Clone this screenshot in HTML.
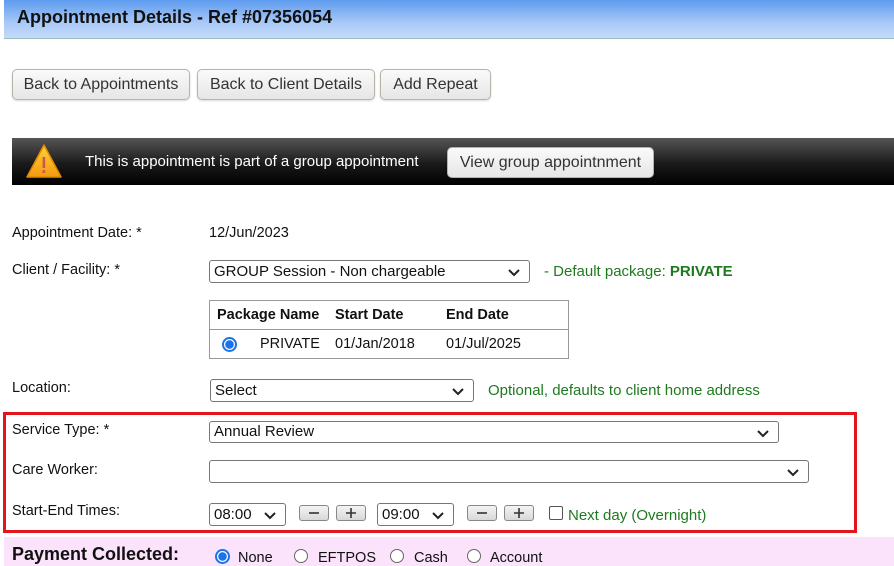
<!DOCTYPE html>
<html><head><style>
*{box-sizing:border-box;margin:0;padding:0}
body{width:894px;height:566px;overflow:hidden;background:#fff;font-family:"Liberation Sans",sans-serif;font-size:14px;color:#111;position:relative}
.a{position:absolute;white-space:nowrap}
.hdr{left:4px;top:0;width:890px;height:39px;background:linear-gradient(#5e9bef,#a9c9f7 60%,#c4dafa);border-bottom:1px solid #9bb}
.hdr span{position:absolute;left:13px;top:7px;font-size:18px;font-weight:bold;color:#111}
.btn{height:31px;border:1px solid #b6b3a8;border-radius:5px;background:linear-gradient(#fafafa,#e6e6e6);font-size:16px;color:#333;text-align:center;line-height:29px;box-shadow:0 1px 2px rgba(0,0,0,.15)}
.bar{left:12px;top:138px;width:882px;height:47px;background:linear-gradient(#555,#1a1a1a 55%,#000)}
.sel{border:1px solid #767676;border-radius:3px;background:#fff;height:23px;padding-left:4px;line-height:21px;font-size:15px;color:#111}
.sel svg{position:absolute;right:9px;top:8px}
.lbl{left:12px;font-size:14.5px}
.grn{color:#1e7a1e;font-size:15px}
.pm{width:30px;height:16px;border:1px solid #888;border-radius:3px;background:linear-gradient(#f4f4f4,#d8d8d8)}
.rad{width:14px;height:14px;border:1px solid #666;border-radius:50%;background:#fff}
.on{width:15px;height:15px;border-radius:50%;border:2px solid #1a73e8;background:radial-gradient(circle,#1a73e8 0,#1a73e8 4px,#fff 4.5px)}
</style></head><body>
<div class="a hdr"><span>Appointment Details - Ref #07356054</span></div>
<div class="a btn" style="left:12px;top:69px;width:178px">Back to Appointments</div>
<div class="a btn" style="left:197px;top:69px;width:178px">Back to Client Details</div>
<div class="a btn" style="left:380px;top:69px;width:111px">Add Repeat</div>
<div class="a bar"></div>
<svg class="a" style="left:25px;top:143px" width="38" height="36" viewBox="0 0 38 36"><defs><linearGradient id="g" x1="0" y1="0" x2="0" y2="1"><stop offset="0" stop-color="#ffd23a"/><stop offset="1" stop-color="#f39a10"/></linearGradient></defs><path d="M19 2 L36 34 L2 34 Z" fill="url(#g)" stroke="#e08a00" stroke-width="1.5" stroke-linejoin="round"/><rect x="17.6" y="14" width="2.6" height="11" fill="#c55"/><rect x="17.6" y="27" width="2.6" height="3" fill="#c55"/></svg>
<div class="a" style="left:85px;top:153px;color:#fff;font-size:15px">This is appointment is part of a group appointment</div>
<div class="a btn" style="left:447px;top:147px;width:207px;height:31px">View group appointnment</div>

<div class="a lbl" style="top:225px">Appointment Date: *</div>
<div class="a" style="left:209px;top:225px;font-size:14.5px">12/Jun/2023</div>
<div class="a lbl" style="top:262px">Client / Facility: *</div>
<div class="a sel" style="left:209px;top:260px;width:321px">GROUP Session - Non chargeable<svg width="12" height="8"><path d="M1 1l5 5 5-5" stroke="#222" stroke-width="2" fill="none"/></svg></div>
<div class="a grn" style="left:544px;top:263px">- Default package: <b>PRIVATE</b></div>

<div class="a" style="left:209px;top:300px;width:360px;height:59px;border:1px solid #999">
<div style="height:29px;border-bottom:1px solid #999;font-weight:bold;font-size:14.5px;line-height:29px;position:relative"><span class="a" style="left:7px">Package Name</span><span class="a" style="left:125px">Start Date</span><span class="a" style="left:236px">End Date</span></div>
<div style="position:relative;height:28px;line-height:28px;font-size:14.5px"><span class="a on" style="left:12px;top:7px"></span><span class="a" style="left:50px">PRIVATE</span><span class="a" style="left:125px">01/Jan/2018</span><span class="a" style="left:236px">01/Jul/2025</span></div>
</div>

<div class="a lbl" style="top:380px">Location:</div>
<div class="a sel" style="left:210px;top:379px;width:264px">Select<svg width="12" height="8"><path d="M1 1l5 5 5-5" stroke="#222" stroke-width="2" fill="none"/></svg></div>
<div class="a grn" style="left:488px;top:382px">Optional, defaults to client home address</div>

<div class="a" style="left:3px;top:412px;width:854px;height:121px;border:3px solid #e3141c"></div>
<div class="a lbl" style="top:422px">Service Type: *</div>
<div class="a sel" style="left:209px;top:421px;width:570px;height:22px;line-height:20px">Annual Review<svg width="12" height="8"><path d="M1 1l5 5 5-5" stroke="#222" stroke-width="2" fill="none"/></svg></div>
<div class="a lbl" style="top:462px">Care Worker:</div>
<div class="a sel" style="left:209px;top:460px;width:600px"><svg width="12" height="8"><path d="M1 1l5 5 5-5" stroke="#222" stroke-width="2" fill="none"/></svg></div>
<div class="a lbl" style="top:503px">Start-End Times:</div>
<div class="a sel" style="left:209px;top:503px;width:77px">08:00<svg width="12" height="8"><path d="M1 1l5 5 5-5" stroke="#222" stroke-width="2" fill="none"/></svg></div>
<div class="a pm" style="left:299px;top:505px"><svg width="28" height="14"><path d="M9 7h10" stroke="#333" stroke-width="1.6"/></svg></div>
<div class="a pm" style="left:336px;top:505px"><svg width="28" height="14"><path d="M9 7h10M14 2v10" stroke="#333" stroke-width="1.6"/></svg></div>
<div class="a sel" style="left:377px;top:503px;width:77px">09:00<svg width="12" height="8"><path d="M1 1l5 5 5-5" stroke="#222" stroke-width="2" fill="none"/></svg></div>
<div class="a pm" style="left:467px;top:505px"><svg width="28" height="14"><path d="M9 7h10" stroke="#333" stroke-width="1.6"/></svg></div>
<div class="a pm" style="left:504px;top:505px"><svg width="28" height="14"><path d="M9 7h10M14 2v10" stroke="#333" stroke-width="1.6"/></svg></div>
<div class="a" style="left:549px;top:506px;width:14px;height:14px;border:1px solid #555;border-radius:2px"></div>
<div class="a grn" style="left:568px;top:507px">Next day (Overnight)</div>

<div class="a" style="left:4px;top:537px;width:890px;height:29px;background:#fbe4fb"></div>
<div class="a" style="left:12px;top:544px;font-size:18px;font-weight:bold">Payment Collected:</div>
<div class="a on" style="left:215px;top:549px"></div>
<div class="a" style="left:238px;top:550px;font-size:14.5px">None</div>
<div class="a rad" style="left:294px;top:549px"></div>
<div class="a" style="left:318px;top:550px;font-size:14.5px">EFTPOS</div>
<div class="a rad" style="left:390px;top:549px"></div>
<div class="a" style="left:414px;top:550px;font-size:14.5px">Cash</div>
<div class="a rad" style="left:467px;top:549px"></div>
<div class="a" style="left:490px;top:550px;font-size:14.5px">Account</div>
</body></html>
